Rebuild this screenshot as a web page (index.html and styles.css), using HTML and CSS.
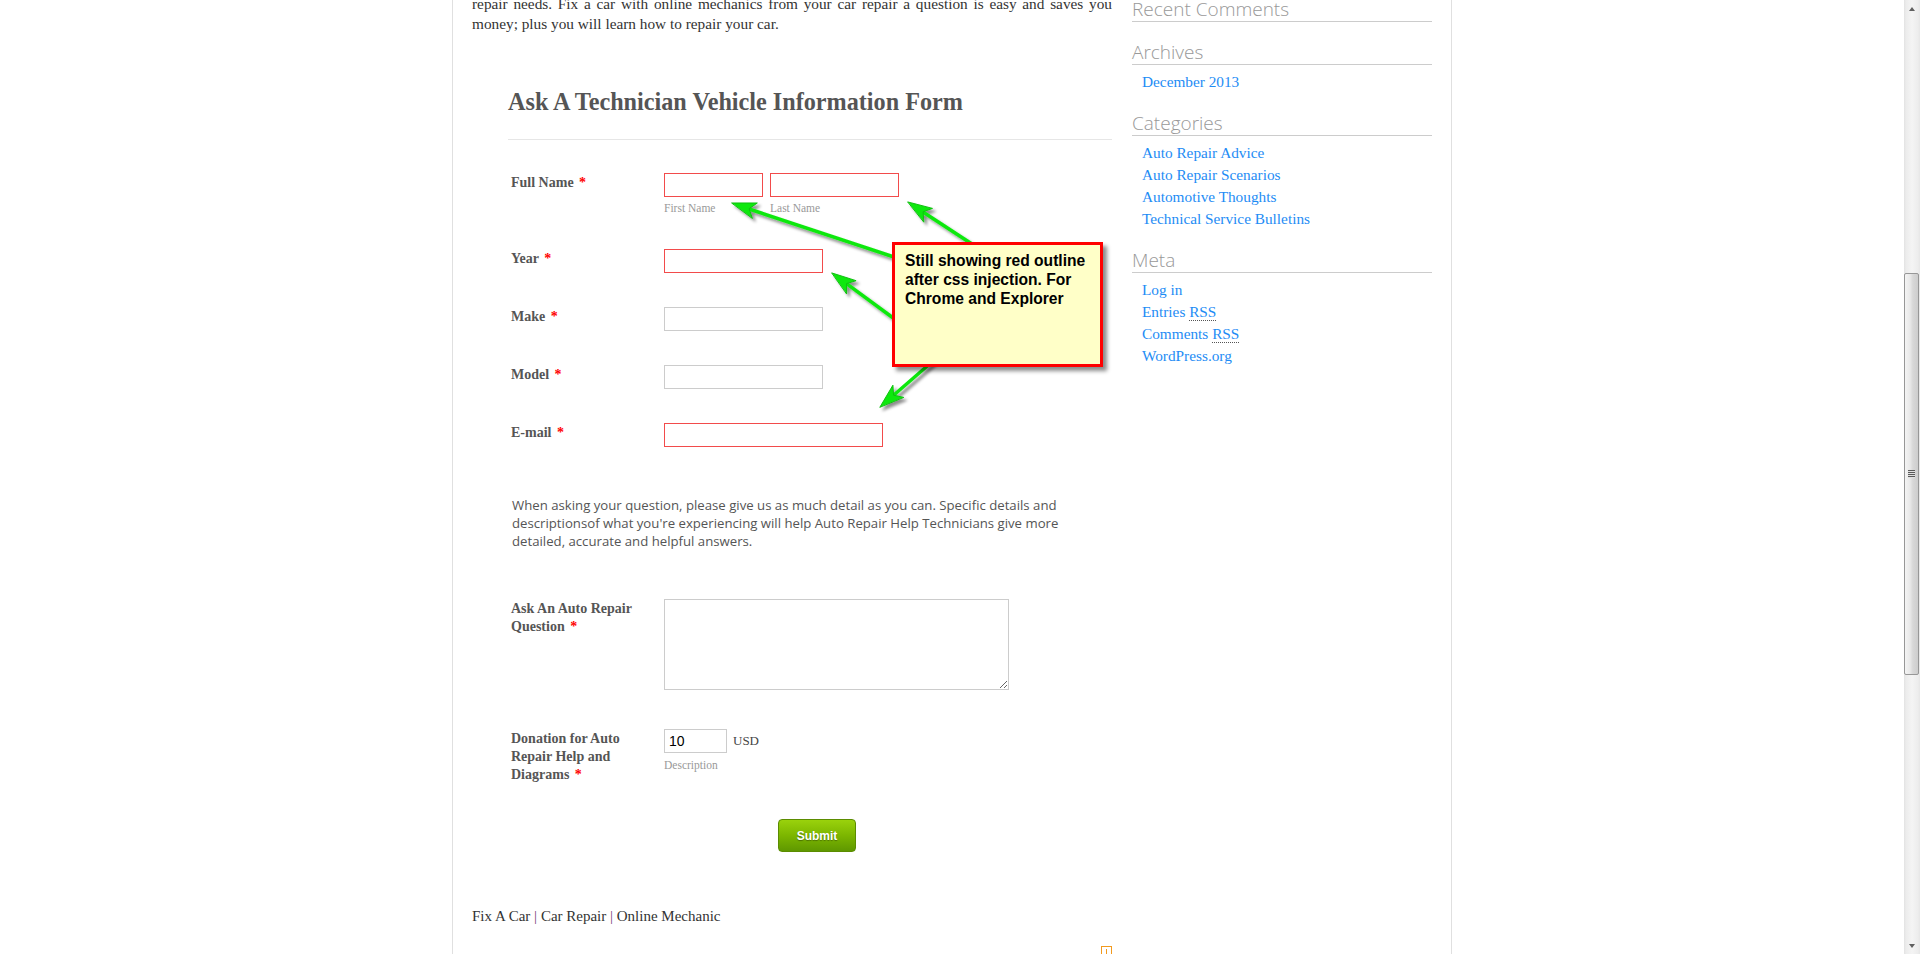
FILE: index.html
```html
<!DOCTYPE html>
<html lang="en">
<head>
    <meta charset="UTF-8">
    <meta name="viewport" content="width=device-width, initial-scale=1.0">
    <title>Ask A Technician - Fix A Car</title>
    <link rel="stylesheet" href="styles.css">
</head>
<body>
<div class="screen">
    <div class="viewport">
        <div class="page">
            <div class="content">
                <p class="intro">repair needs. Fix a car with online mechanics from your car repair a question is easy and saves you money; plus you will learn how to repair your car.</p>

                <form class="tech-form">
                    <h2 class="form-title">Ask A Technician Vehicle Information Form</h2>

                    <div class="form-fields">
                        <div class="form-line">
                            <label class="form-label">Full Name <span class="req">*</span></label>
                            <div class="form-input">
                                <div class="name-pair">
                                    <span class="sub-field">
                                        <input type="text" class="field field-error w-first">
                                        <span class="sub-label">First Name</span>
                                    </span>
                                    <span class="sub-field">
                                        <input type="text" class="field field-error w-last">
                                        <span class="sub-label">Last Name</span>
                                    </span>
                                </div>
                            </div>
                        </div>

                        <div class="form-line">
                            <label class="form-label">Year <span class="req">*</span></label>
                            <div class="form-input"><input type="text" class="field field-error w-mid"></div>
                        </div>

                        <div class="form-line">
                            <label class="form-label">Make <span class="req">*</span></label>
                            <div class="form-input"><input type="text" class="field w-mid"></div>
                        </div>

                        <div class="form-line">
                            <label class="form-label">Model <span class="req">*</span></label>
                            <div class="form-input"><input type="text" class="field w-mid"></div>
                        </div>

                        <div class="form-line">
                            <label class="form-label">E-mail <span class="req">*</span></label>
                            <div class="form-input"><input type="text" class="field field-error w-wide"></div>
                        </div>

                        <div class="form-text">
                            <p>When asking your question, please give us as much detail as you can. Specific details and descriptionsof what you're experiencing will help Auto Repair Help Technicians give more detailed, accurate and helpful answers.</p>
                        </div>

                        <div class="form-line line-textarea">
                            <label class="form-label">Ask An Auto Repair Question <span class="req">*</span></label>
                            <div class="form-input"><textarea class="field question"></textarea></div>
                        </div>

                        <div class="form-line">
                            <label class="form-label">Donation for Auto Repair Help and Diagrams <span class="req">*</span></label>
                            <div class="form-input">
                                <div class="amount-row">
                                    <input type="text" class="field amount" value="10">
                                    <span class="currency">USD</span>
                                </div>
                                <span class="sub-label">Description</span>
                            </div>
                        </div>

                        <div class="button-line">
                            <button type="button" class="submit-btn">Submit</button>
                        </div>
                    </div>
                </form>

                <div class="site-footer">
                    Fix A Car <span class="sep">|</span> Car Repair <span class="sep">|</span> Online Mechanic
                </div>
                <div class="footer-icon-row">
                    <span class="footer-icon"></span>
                </div>
            </div>

            <div class="sidebar">
                <div class="widget">
                    <h3>Recent Comments</h3>
                </div>
                <div class="widget">
                    <h3>Archives</h3>
                    <ul>
                        <li><a href="#">December 2013</a></li>
                    </ul>
                </div>
                <div class="widget">
                    <h3>Categories</h3>
                    <ul>
                        <li><a href="#">Auto Repair Advice</a></li>
                        <li><a href="#">Auto Repair Scenarios</a></li>
                        <li><a href="#">Automotive Thoughts</a></li>
                        <li><a href="#">Technical Service Bulletins</a></li>
                    </ul>
                </div>
                <div class="widget">
                    <h3>Meta</h3>
                    <ul>
                        <li><a href="#">Log in</a></li>
                        <li><a href="#">Entries <abbr>RSS</abbr></a></li>
                        <li><a href="#">Comments <abbr>RSS</abbr></a></li>
                        <li><a href="#">WordPress.org</a></li>
                    </ul>
                </div>
            </div>
        </div>

        <!-- annotation drawn over the screenshot -->
        <svg class="arrows" width="1904" height="954" viewBox="0 0 1904 954">
            <defs>
                <filter id="shadow" x="-20%" y="-20%" width="140%" height="140%">
                    <feDropShadow dx="3" dy="3" stdDeviation="1.6" flood-color="#000" flood-opacity="0.45"/>
                </filter>
            </defs>
            <g filter="url(#shadow)" stroke-linecap="round">
                <line class="arrow-line" x1="900" y1="259" x2="749" y2="209"/>
                <polygon class="arrow-head" points="732,203 757.3,203 749.1,208.7 752.3,218.1"/>

                <line class="arrow-line" x1="975" y1="246" x2="923" y2="212"/>
                <polygon class="arrow-head" points="908,202 932.5,208.4 923.1,211.8 923.8,221.8"/>

                <line class="arrow-line" x1="900" y1="323" x2="846.5" y2="283.6"/>
                <polygon class="arrow-head" points="832,273 856.1,280.7 846.5,283.6 846.6,293.6"/>

                <line class="arrow-line" x1="933" y1="361" x2="893.6" y2="395.2"/>
                <polygon class="arrow-head" points="880,407 892.9,385.2 893.6,395.2 903.4,397.3"/>
            </g>
        </svg>
        <div class="callout">Still showing red outline<br>after css injection. For<br>Chrome and Explorer</div>
    </div>

    <div class="scrollbar">
        <div class="scroll-btn"><span class="tri-up"></span></div>
        <div class="scroll-track">
            <div class="scroll-thumb"><span class="grip"></span></div>
        </div>
        <div class="scroll-btn"><span class="tri-down"></span></div>
    </div>
</div>
</body>
</html>
```

FILE: styles.css
```css
html, body {
    margin: 0;
    padding: 0;
    background: #fff;
    overflow: hidden;
}
body {
    font-family: 'Liberation Serif', 'Times New Roman', serif;
    color: #333;
}
.screen {
    display: flex;
    height: 954px;
}
.viewport {
    flex: 1;
    position: relative;
    overflow: hidden;
}
.page {
    width: 1000px;
    margin: 0 auto;
    box-sizing: border-box;
    border-left: 1px solid #e0e0e0;
    border-right: 1px solid #e0e0e0;
    padding: 0 19px;
    min-height: 954px;
    display: flex;
    align-items: flex-start;
}

/* main column */
.content {
    width: 640px;
    flex: none;
    margin-top: -6px;
}
.intro {
    margin: 0;
    font-size: 15.3px;
    line-height: 20px;
    text-align: justify;
    color: #333;
}
.tech-form {
    margin: 53px 0 0 36px;
}
.form-title {
    margin: 0;
    padding: 0 0 22px;
    font-size: 24.2px;
    line-height: 30px;
    font-weight: bold;
    color: #555;
    border-bottom: 1px solid #e6e6e6;
}
.form-fields {
    padding-top: 16px;
}
.form-line {
    display: flex;
    padding: 17px 0;
}
.line-textarea {
    padding-bottom: 22px;
}
.form-label {
    width: 156px;
    flex: none;
    box-sizing: border-box;
    padding: 1px 13px 0 3px;
    font-size: 14px;
    line-height: 18px;
    font-weight: bold;
    color: #555;
}
.req {
    color: #f00;
    margin-left: 2px;
}
.form-input {
    display: flex;
    flex-direction: column;
    align-items: flex-start;
}
.name-pair {
    display: flex;
    gap: 7px;
}
.sub-field {
    display: flex;
    flex-direction: column;
}
.sub-label {
    margin-top: 4px;
    font-size: 11.5px;
    line-height: 14px;
    color: #999;
}
.field {
    box-sizing: border-box;
    height: 24px;
    margin: 0;
    padding: 2px 4px;
    border: 1px solid #cccccc;
    border-radius: 0;
    background: #fff;
    font-family: 'Liberation Sans', Arial, sans-serif;
    font-size: 14px;
    color: #000;
    outline: none;
}
.field-error {
    border-color: #f24b4b;
}
.w-first { width: 99px; }
.w-last { width: 129px; }
.w-mid { width: 159px; }
.w-wide { width: 219px; }
.question {
    width: 345px;
    height: 91px;
}
.amount-row {
    display: flex;
    align-items: center;
}
.amount {
    width: 63px;
}
.currency {
    margin-left: 6px;
    font-size: 13px;
    color: #444;
}
.amount-row + .sub-label {
    margin-top: 5px;
}
.form-text {
    padding: 32px 0 32px 4px;
}
.form-text p {
    margin: 0;
    width: 565px;
    font-family: 'Open Sans', sans-serif;
    font-size: 13.2px;
    line-height: 18px;
    color: #555;
}
.button-line {
    padding: 18px 0 0 270px;
}
.submit-btn {
    width: 78px;
    height: 33px;
    border: 1px solid #5b8c00;
    border-radius: 4px;
    background: linear-gradient(to bottom, #9ad20c 0%, #7cb600 50%, #5f9800 100%);
    color: #fff;
    font-family: 'Liberation Sans', Arial, sans-serif;
    font-size: 12px;
    font-weight: bold;
    text-shadow: 0 1px 1px rgba(0,0,0,0.35);
    cursor: pointer;
}
.site-footer {
    margin-top: 54px;
    font-size: 15px;
    line-height: 20px;
    color: #333;
}
.sep {
    color: #7a3b7a;
}
.footer-icon-row {
    margin-top: 20px;
    display: flex;
    justify-content: flex-end;
}
.footer-icon {
    width: 9px;
    height: 9px;
    border: 1px solid #f29a1e;
    position: relative;
}
.footer-icon::after {
    content: "";
    position: absolute;
    left: 4px;
    top: 2px;
    width: 1px;
    height: 6px;
    background: #f29a1e;
}

/* sidebar */
.sidebar {
    width: 300px;
    flex: none;
    margin: -3px 0 0 20px;
}
.widget {
    margin-bottom: 18px;
}
.widget h3 {
    margin: 0;
    font-family: 'Open Sans', sans-serif;
    font-weight: 300;
    font-size: 19px;
    line-height: 24px;
    color: #999;
    border-bottom: 1px solid #cccccc;
}
.widget ul {
    margin: 6px 0 0;
    padding: 0 0 0 10px;
    list-style: none;
}
.widget li {
    font-size: 15.3px;
    line-height: 22px;
}
.widget a {
    color: #1e8cf5;
    text-decoration: none;
}
.widget abbr {
    text-decoration: none;
    border-bottom: 1px dotted #555;
}

/* annotation */
.arrows {
    position: absolute;
    left: 0;
    top: 0;
    pointer-events: none;
}
.arrow-line {
    stroke: #10e810;
    stroke-width: 3.5;
}
.arrow-head {
    fill: #10e810;
    stroke: #0cc00c;
    stroke-width: 1;
    stroke-linejoin: round;
}
.callout {
    position: absolute;
    left: 892px;
    top: 242px;
    width: 211px;
    height: 125px;
    box-sizing: border-box;
    padding: 6px 10px;
    border: 3px solid #f00;
    background: #ffffc8;
    box-shadow: 4px 4px 4px rgba(0,0,0,0.45);
    font-family: 'Liberation Sans', Arial, sans-serif;
    font-size: 15.6px;
    font-weight: bold;
    line-height: 19px;
    color: #000;
    white-space: nowrap;
}

/* fake window scrollbar */
.scrollbar {
    width: 16px;
    flex: none;
    display: flex;
    flex-direction: column;
    background: linear-gradient(to right, #e2e2e2 0, #ececec 2px, #f4f4f4 8px, #ededed 14px, #e6e6e6 16px);
}
.scroll-btn {
    height: 17px;
    flex: none;
    display: flex;
    align-items: center;
    justify-content: center;
}
.tri-up {
    width: 0;
    height: 0;
    border-left: 3.5px solid transparent;
    border-right: 3.5px solid transparent;
    border-bottom: 4px solid #606060;
}
.tri-down {
    width: 0;
    height: 0;
    border-left: 3.5px solid transparent;
    border-right: 3.5px solid transparent;
    border-top: 4px solid #606060;
}
.scroll-track {
    flex: 1;
    padding-top: 256px;
}
.scroll-thumb {
    box-sizing: border-box;
    width: 15px;
    height: 402px;
    border: 1px solid #979797;
    border-radius: 2px;
    background: linear-gradient(to right, #f4f4f4 0%, #e8e8e8 40%, #d8d8d8 60%, #cdcdcd 100%);
    display: flex;
    align-items: center;
    justify-content: center;
}
.grip {
    width: 7px;
    height: 8px;
    background: repeating-linear-gradient(to bottom, #5a5a5a 0, #5a5a5a 1px, #e0e0e0 1px, #e0e0e0 2px);
}
```
